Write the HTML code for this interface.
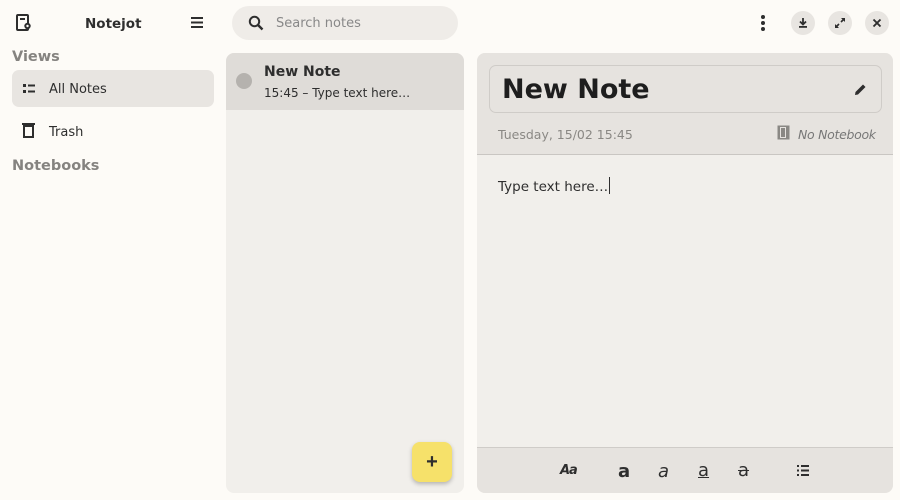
<!DOCTYPE html>
<html><head><style>
*{box-sizing:border-box;margin:0;padding:0}
body{width:900px;height:500px;background:#fdfbf7;font-family:"Liberation Sans","DejaVu Sans",sans-serif;color:#2e2e2e;position:relative;overflow:hidden}
.abs{position:absolute}
.t{font-family:"DejaVu Sans","Liberation Sans",sans-serif}
</style></head><body>
<svg class="abs" style="left:16px;top:14px" width="16" height="17" viewBox="0 0 16 17"><rect x="1" y="1" width="11" height="15" rx="1" fill="none" stroke="#2e2e2e" stroke-width="2"/><rect x="4" y="4" width="5" height="2" fill="#2e2e2e"/><circle cx="11.5" cy="12" r="3.2" fill="#2e2e2e"/><circle cx="11.5" cy="12" r="1.2" fill="#fdfbf7"/></svg>
<div class="abs t" style="left:85px;top:16px;font-size:13.5px;font-weight:bold">Notejot</div>
<svg class="abs" style="left:191px;top:17px" width="12" height="11"><rect y="0" width="12" height="2" fill="#2e2e2e"/><rect y="4.5" width="12" height="2" fill="#2e2e2e"/><rect y="9" width="12" height="2" fill="#2e2e2e"/></svg>
<div class="abs" style="left:232px;top:6px;width:226px;height:34px;border-radius:17px;background:#efece8"></div>
<svg class="abs" style="left:248px;top:15px" width="16" height="16"><circle cx="6.5" cy="6.5" r="4.7" fill="none" stroke="#2e2e2e" stroke-width="2"/><line x1="10" y1="10" x2="14.5" y2="14.5" stroke="#2e2e2e" stroke-width="2.4"/></svg>
<div class="abs t" style="left:276px;top:16px;font-size:13px;color:#888">Search notes</div>
<div class="abs t" style="left:12px;top:49px;font-size:14.5px;font-weight:bold;color:#858380">Views</div>
<div class="abs" style="left:12px;top:70px;width:202px;height:37px;border-radius:7px;background:#e8e5e1"></div>
<svg class="abs" style="left:23px;top:84px" width="12" height="9"><rect width="3" height="3" fill="#2e2e2e"/><rect x="5" y="0.5" width="7" height="2" fill="#2e2e2e"/><rect y="6" width="3" height="3" fill="#2e2e2e"/><rect x="5" y="6.5" width="7" height="2" fill="#2e2e2e"/></svg>
<div class="abs t" style="left:49px;top:82px;font-size:13px">All Notes</div>
<svg class="abs" style="left:22px;top:123px" width="13" height="15"><rect x="0" y="0" width="13" height="2" fill="#2e2e2e"/><rect x="2" y="3" width="9" height="11" fill="none" stroke="#2e2e2e" stroke-width="2"/></svg>
<div class="abs t" style="left:49px;top:125px;font-size:13px">Trash</div>
<div class="abs t" style="left:12px;top:158px;font-size:14.5px;font-weight:bold;color:#858380">Notebooks</div>

<div class="abs" style="left:226px;top:53px;width:238px;height:440px;border-radius:8px;background:#f1efeb;overflow:hidden">
 <div style="height:57px;background:#dfdcd8"></div>
</div>
<div class="abs" style="left:236px;top:73px;width:16px;height:16px;border-radius:50%;background:#b5b2ae"></div>
<div class="abs t" style="left:264px;top:64px;font-size:14px;font-weight:bold">New Note</div>
<div class="abs t" style="left:264px;top:86px;font-size:12px">15:45 – Type text here…</div>
<div class="abs" style="left:412px;top:442px;width:40px;height:40px;border-radius:8px;background:#f6e16a;box-shadow:0 2px 4px rgba(0,0,0,.25)"></div>
<div class="abs" style="left:412px;top:451px;width:40px;text-align:center;font-size:20px;font-weight:bold;line-height:22px">+</div>

<div class="abs" style="left:477px;top:53px;width:416px;height:440px;border-radius:8px;background:#f1efeb;overflow:hidden">
 <div style="height:102px;background:#e6e3df;border-bottom:1px solid #c9c6c2"></div>
 <div style="position:absolute;left:0;top:394px;width:416px;height:46px;background:#e6e3df;border-top:1px solid #cfccc8"></div>
</div>
<div class="abs" style="left:489px;top:65px;width:393px;height:48px;border-radius:7px;border:1px solid #cfccc8"></div>
<div class="abs t" style="left:502px;top:74px;font-size:27px;font-weight:bold;color:#1e1e1e">New Note</div>
<svg class="abs" style="left:854px;top:83px" width="13" height="13"><path d="M1 12 L1.5 9 L9 1.5 L11.5 4 L4 11.5 Z" fill="#2e2e2e"/></svg>
<div class="abs t" style="left:498px;top:127px;font-size:12.5px;color:#8a8884">Tuesday, 15/02 15:45</div>
<svg class="abs" style="left:777px;top:125px" width="13" height="15"><rect x="0.5" y="0.5" width="12" height="14" fill="#8a8884"/><rect x="3" y="2" width="6" height="11" fill="#e6e3df"/><rect x="4" y="3" width="4" height="9" fill="#8a8884"/></svg>
<div class="abs t" style="left:798px;top:127px;font-size:12.5px;font-style:italic;color:#777;letter-spacing:-0.3px">No Notebook</div>
<div class="abs t" style="left:498px;top:177px;font-size:13.5px">Type text here…<span style="display:inline-block;width:1px;height:17px;background:#2e2e2e;vertical-align:-3px;margin-left:1px"></span></div>

<div class="abs t" style="left:560px;top:463px;font-size:13px;font-weight:bold;font-style:italic;letter-spacing:-1px">Aa</div>
<div class="abs t" style="left:618px;top:461px;font-size:18px;font-weight:900">a</div>
<div class="abs t" style="left:658px;top:461px;font-size:18px;font-style:italic">a</div>
<div class="abs t" style="left:698px;top:460px;font-size:18px;text-decoration:underline">a</div>
<div class="abs t" style="left:738px;top:460px;font-size:18px;text-decoration:line-through">a</div>
<svg class="abs" style="left:797px;top:465px" width="12" height="11"><rect width="2" height="2" fill="#2e2e2e"/><rect x="4" width="8" height="2" fill="#2e2e2e"/><rect y="4.5" width="2" height="2" fill="#2e2e2e"/><rect x="4" y="4.5" width="8" height="2" fill="#2e2e2e"/><rect y="9" width="2" height="2" fill="#2e2e2e"/><rect x="4" y="9" width="8" height="2" fill="#2e2e2e"/></svg>

<svg class="abs" style="left:760px;top:14px" width="6" height="18"><circle cx="3" cy="3" r="2" fill="#2e2e2e"/><circle cx="3" cy="9" r="2" fill="#2e2e2e"/><circle cx="3" cy="15" r="2" fill="#2e2e2e"/></svg>
<div class="abs" style="left:791px;top:11px;width:24px;height:24px;border-radius:50%;background:#e8e5e1"></div>
<svg class="abs" style="left:797px;top:17px" width="12" height="12"><path d="M6 1 V7 M3 4.5 L6 7.5 L9 4.5" stroke="#2e2e2e" stroke-width="1.8" fill="none"/><rect x="2" y="9" width="8" height="1.8" fill="#2e2e2e"/></svg>
<div class="abs" style="left:828px;top:11px;width:24px;height:24px;border-radius:50%;background:#e8e5e1"></div>
<svg class="abs" style="left:834px;top:17px" width="12" height="12"><path d="M7 1 H11 V5 Z M1 7 V11 H5 Z" fill="#2e2e2e"/><path d="M10 2 L7 5 M2 10 L5 7" stroke="#2e2e2e" stroke-width="1.6"/></svg>
<div class="abs" style="left:865px;top:11px;width:24px;height:24px;border-radius:50%;background:#e8e5e1"></div>
<svg class="abs" style="left:872px;top:18px" width="10" height="10"><path d="M1.5 1.5 L8.5 8.5 M8.5 1.5 L1.5 8.5" stroke="#2e2e2e" stroke-width="1.9"/></svg>
</body></html>
